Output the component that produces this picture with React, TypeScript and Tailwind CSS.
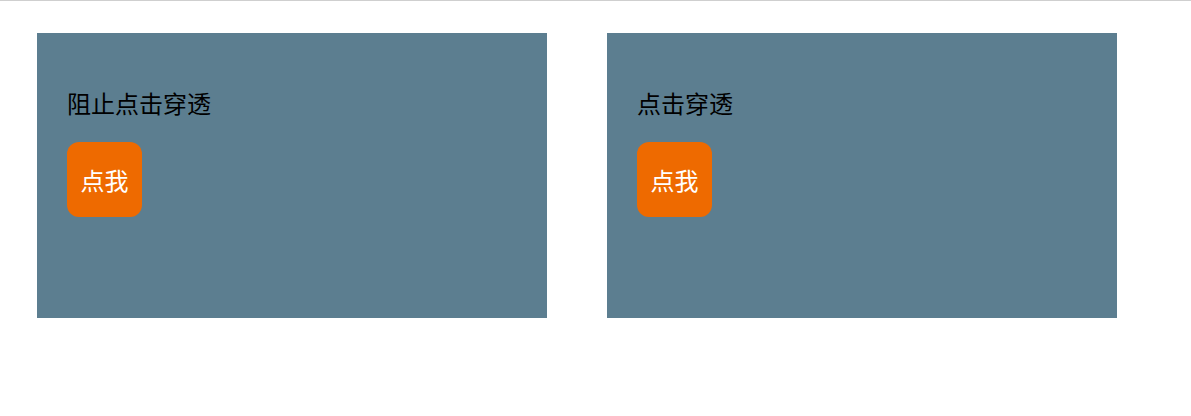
export default function App() {
  const panels = ["阻止点击穿透", "点击穿透"];

  return (
    <div className="w-[1191px] h-[416px] bg-white border-t border-[#cfcfcf] font-['Noto_Sans_CJK_SC',sans-serif]">
      <div className="flex gap-[60px] pl-[37px] pt-[32px]">
        {panels.map((title) => (
          <div key={title} className="w-[510px] h-[285px] bg-[#5c7e90] pl-[30px] pt-[58px]">
            <p className="text-[24px] leading-[24px] text-black">{title}</p>
            <button className="mt-[27px] w-[75px] h-[75px] rounded-[12px] bg-[#ee6a00] text-white text-[24px] leading-[24px] flex items-center justify-center">
              点我
            </button>
          </div>
        ))}
      </div>
    </div>
  );
}
